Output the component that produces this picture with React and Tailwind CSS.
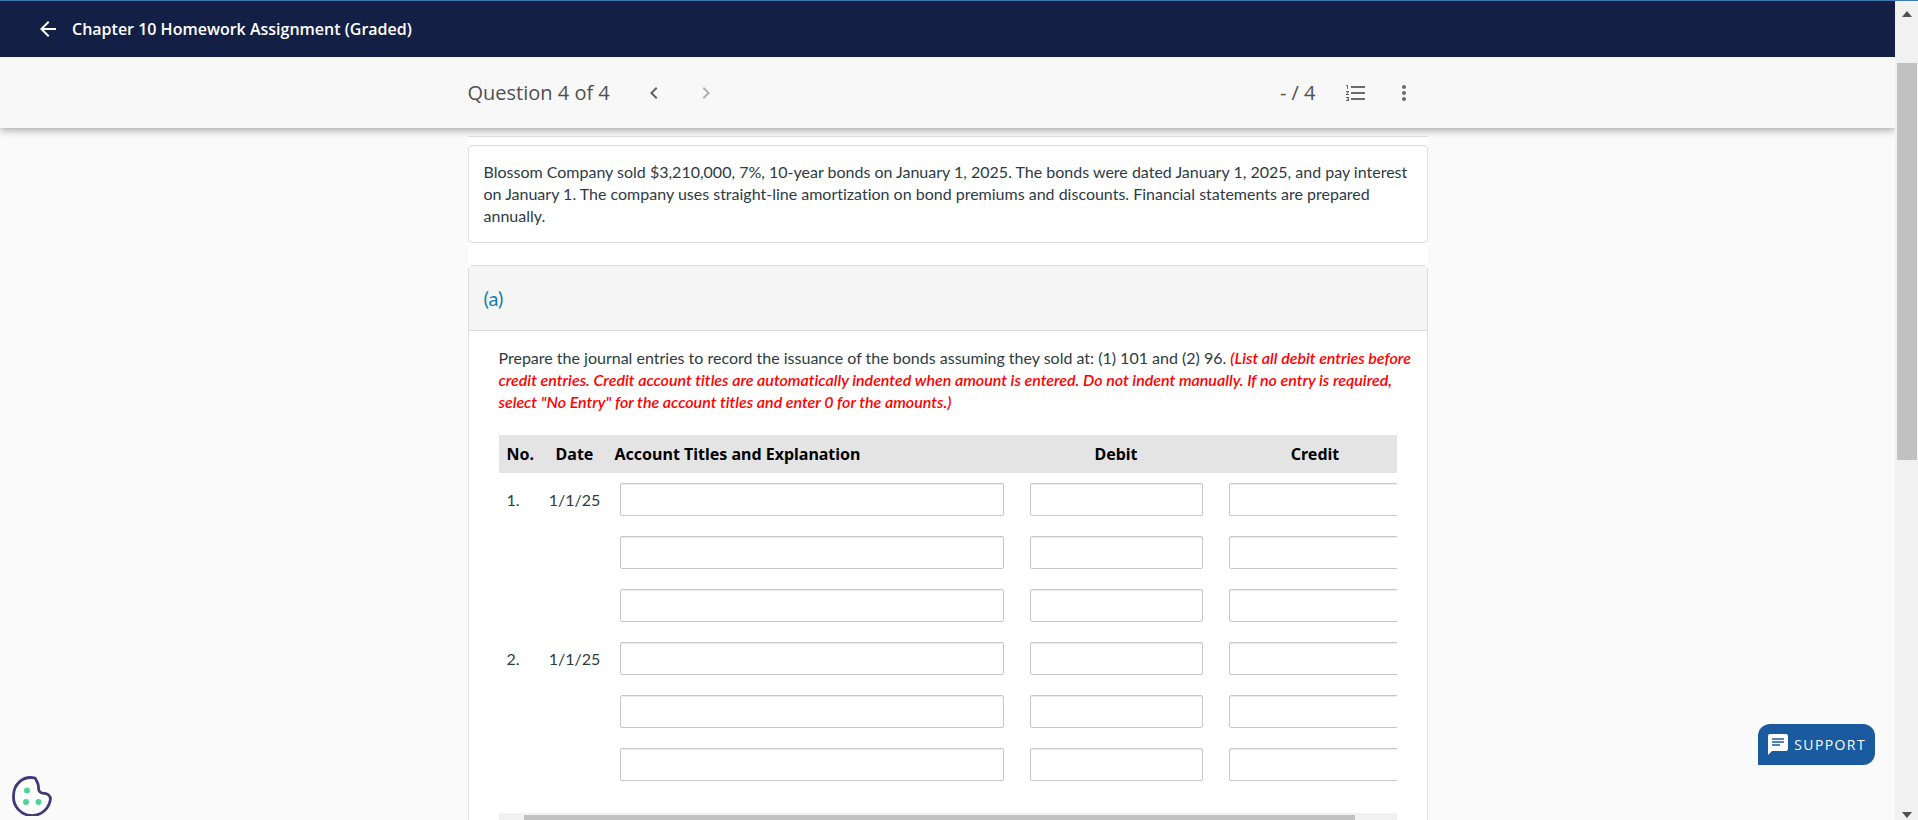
import { useState } from "react"

const entries = [
    { no: "1.", date: "1/1/25" },
    { no: "", date: "" },
    { no: "", date: "" },
    { no: "2.", date: "1/1/25" },
    { no: "", date: "" },
    { no: "", date: "" }
]

const inputClass =
    "block h-[33px] w-full rounded-xs border border-[#c8c8c8] bg-white px-2 shadow-[inset_0_1px_1px_rgba(0,0,0,0.08)] outline-none focus:border-blue-400"

function TopBar() {
    return (
        <header className="relative z-20 flex h-[57px] items-center gap-3 border-t border-[#3f78b5] bg-[#131f45] pl-9 text-white">
            <button aria-label="Back" className="flex size-6 items-center justify-center">
                <svg viewBox="0 0 24 24" className="size-6" fill="currentColor">
                    <path d="M20 11H7.83l5.59-5.59L12 4l-8 8 8 8 1.41-1.41L7.83 13H20v-2z" />
                </svg>
            </button>
            <h1 className="font-['Open_Sans',sans-serif] text-base font-semibold">Chapter 10 Homework Assignment (Graded)</h1>
        </header>
    )
}

function QuestionBar() {
    return (
        <div className="relative z-10 h-[71px] bg-[#f8f8f8] shadow-[0_2px_8px_rgba(0,0,0,0.35)]">
            <div className="mx-auto flex h-full max-w-[960px] items-center font-['Open_Sans',sans-serif] text-xl text-[#505050]">
                <span>Question 4 of 4</span>
                <button aria-label="Previous question" className="ml-8 flex size-6 items-center justify-center text-[#616161]">
                    <svg viewBox="0 0 24 24" className="size-6" fill="currentColor">
                        <path d="M15.41 7.41L14 6l-6 6 6 6 1.41-1.41L10.83 12z" />
                    </svg>
                </button>
                <button aria-label="Next question" disabled className="ml-7 flex size-6 items-center justify-center text-[#b0b0b0]">
                    <svg viewBox="0 0 24 24" className="size-6" fill="currentColor">
                        <path d="M10 6L8.59 7.41 13.17 12l-4.58 4.59L10 18l6-6z" />
                    </svg>
                </button>
                <span className="ml-auto">- / 4</span>
                <button aria-label="Question list" className="ml-7 flex size-6 items-center justify-center text-[#6b6b6b]">
                    <svg viewBox="0 0 24 24" className="size-6" fill="currentColor">
                        <path d="M2 17h2v.5H3v1h1v.5H2v1h3v-4H2v1zm1-9h1V4H2v1h1v3zm-1 3h1.800L2 13.100v.9h3v-1H3.200L5 10.900V10H2v1zm5-6v2h14V5H7zm0 14h14v-2H7v2zm0-6h14v-2H7v2z" />
                    </svg>
                </button>
                <button aria-label="More options" className="mr-3 ml-6 flex size-6 items-center justify-center text-[#6b6b6b]">
                    <svg viewBox="0 0 24 24" className="size-6" fill="currentColor">
                        <path d="M12 8c1.100 0 2-.9 2-2s-.9-2-2-2-2 .9-2 2 .9 2 2 2zm0 2c-1.100 0-2 .9-2 2s.9 2 2 2 2-.9 2-2-.9-2-2-2zm0 6c-1.100 0-2 .9-2 2s.9 2 2 2 2-.9 2-2-.9-2-2-2z" />
                    </svg>
                </button>
            </div>
        </div>
    )
}

function JournalTable() {
    const [values, setValues] = useState({})

    const field = (row, name) => ({
        "aria-label": `${name} row ${row + 1}`,
        value: values[`${name}${row}`] || "",
        onChange: e => setValues({ ...values, [`${name}${row}`]: e.target.value })
    })

    return (
        <div className="mt-[22px]">
            <div className="overflow-hidden">
                <table className="w-[962px] table-fixed border-collapse">
                    <thead>
                        <tr className="h-[38px] bg-[#e4e4e4] font-['Noto_Sans',sans-serif] text-base text-black">
                            <th className="w-[46px] pl-2 text-left font-bold">No.</th>
                            <th className="w-[60px] text-center font-bold">Date</th>
                            <th className="w-[412px] pl-[10px] text-left font-bold">Account Titles and Explanation</th>
                            <th className="w-[199px] text-center font-bold">Debit</th>
                            <th className="w-[199px] text-center font-bold">Credit</th>
                            <th className="w-[46px]"></th>
                        </tr>
                    </thead>
                    <tbody>
                        {entries.map((entry, i) => (
                            <tr key={i} className="h-[53px]">
                                <td className="pl-2">{entry.no}</td>
                                <td className="text-center">{entry.date}</td>
                                <td className="pr-[13px] pl-[15px]">
                                    <input type="text" className={inputClass} {...field(i, "Account title")} />
                                </td>
                                <td className="px-[13px]">
                                    <input type="text" className={inputClass} {...field(i, "Debit")} />
                                </td>
                                <td className="px-[13px]">
                                    <input type="text" className={inputClass} {...field(i, "Credit")} />
                                </td>
                                <td></td>
                            </tr>
                        ))}
                    </tbody>
                </table>
            </div>
            <div className="mt-[22px] h-5 bg-[#f1f1f1] pt-0.5 pr-[42px] pl-[25px]">
                <div className="h-4 bg-[#c1c1c1]"></div>
            </div>
        </div>
    )
}

function ScrollBar() {
    return (
        <div className="relative z-20 flex w-[23px] shrink-0 flex-col items-center border-t border-[#3f78b5] bg-[#f1f1f1]">
            <svg viewBox="0 0 10 6" className="mt-2.5 h-1.5 w-2.5" fill="#505050">
                <path d="M0 6L5 0l5 6z" />
            </svg>
            <div className="mt-[46px] h-[397px] w-5 bg-[#c1c1c1]"></div>
            <svg viewBox="0 0 10 6" className="mt-auto mb-0.5 h-1.5 w-2.5" fill="#505050">
                <path d="M0 0l5 6 5-6z" />
            </svg>
        </div>
    )
}

export default function App() {
    return (
        <div className="flex h-screen overflow-hidden bg-[#fafafa] font-[Lato,sans-serif] text-base text-[#2d3b45] [font-variant-ligatures:none]">
            <div className="flex min-w-0 flex-1 flex-col">
                <TopBar />
                <QuestionBar />
                <main className="min-h-0 flex-1 overflow-hidden">
                    <div className="mx-auto max-w-[960px] bg-white">
                        <div className="h-[9px] border-b border-[#e0e0e0] bg-[#fafafa]"></div>
                        <section className="mt-2 rounded-sm border border-[#dcdcdc] px-[15px] py-[15px] leading-[22px]">
                            <p>
                                Blossom Company sold $3,210,000, 7%, 10-year bonds on January 1, 2025. The bonds were dated January 1, 2025, and pay interest on January 1. The company uses straight-line amortization on bond premiums and discounts. Financial statements are prepared annually.
                            </p>
                        </section>
                        <section className="mt-[22px] rounded-sm border border-[#dcdcdc]">
                            <h2 className="flex h-[65px] items-center border-b border-[#dcdcdc] bg-[#f5f5f5] px-[15px] text-xl text-[#0f7fb0]">(a)</h2>
                            <div className="px-[30px] pt-4 pb-10">
                                <p className="-mr-5 leading-[22px]">
                                    Prepare the journal entries to record the issuance of the bonds assuming they sold at: (1) 101 and (2) 96.{" "}
                                    <strong className="font-semibold text-[#ff0000] italic">
                                        (List all debit entries before
                                        <br />
                                        credit entries. Credit account titles are automatically indented when amount is entered. Do not indent manually. If no entry is required,
                                        <br />
                                        select "No Entry" for the account titles and enter 0 for the amounts.)
                                    </strong>
                                </p>
                                <JournalTable />
                            </div>
                        </section>
                    </div>
                </main>
            </div>
            <ScrollBar />

            <button aria-label="Cookie settings" className="fixed bottom-1 left-3">
                <svg viewBox="0 0 40 40" className="size-10">
                    <path
                        d="M23 2C11 -.5 1.500 8 1.500 20a18.500 18.500 0 0 0 37 2c-1-2.500-3-4.500-6-4.700-4 .2-6-1.800-6-5.300.3-4-1-6-3.500-10z"
                        fill="#fff"
                        stroke="#3f3a78"
                        strokeWidth="2.800"
                        strokeLinejoin="round"
                    />
                    <circle cx="15" cy="14.500" r="3" fill="#4cd69a" />
                    <circle cx="14" cy="26" r="3" fill="#4cd69a" />
                    <circle cx="26.500" cy="26" r="3" fill="#4cd69a" />
                </svg>
            </button>
            <button className="fixed right-[43px] bottom-[55px] flex h-[41px] items-center gap-1.5 rounded-xl rounded-bl-none bg-[#1a5ba0] pr-[9px] pl-[10px] font-['Open_Sans',sans-serif] text-sm font-medium tracking-widest text-white">
                <svg viewBox="0 0 20 21" className="h-[21px] w-5" fill="#fff">
                    <path d="M2 0h16a2 2 0 0 1 2 2v13a2 2 0 0 1-2 2H4l-4 4V2a2 2 0 0 1 2-2z" />
                    <path d="M4 5h12M4 8h12M4 11h8" stroke="#1a5ba0" strokeWidth="1.700" />
                </svg>
                SUPPORT
            </button>
        </div>
    )
}
